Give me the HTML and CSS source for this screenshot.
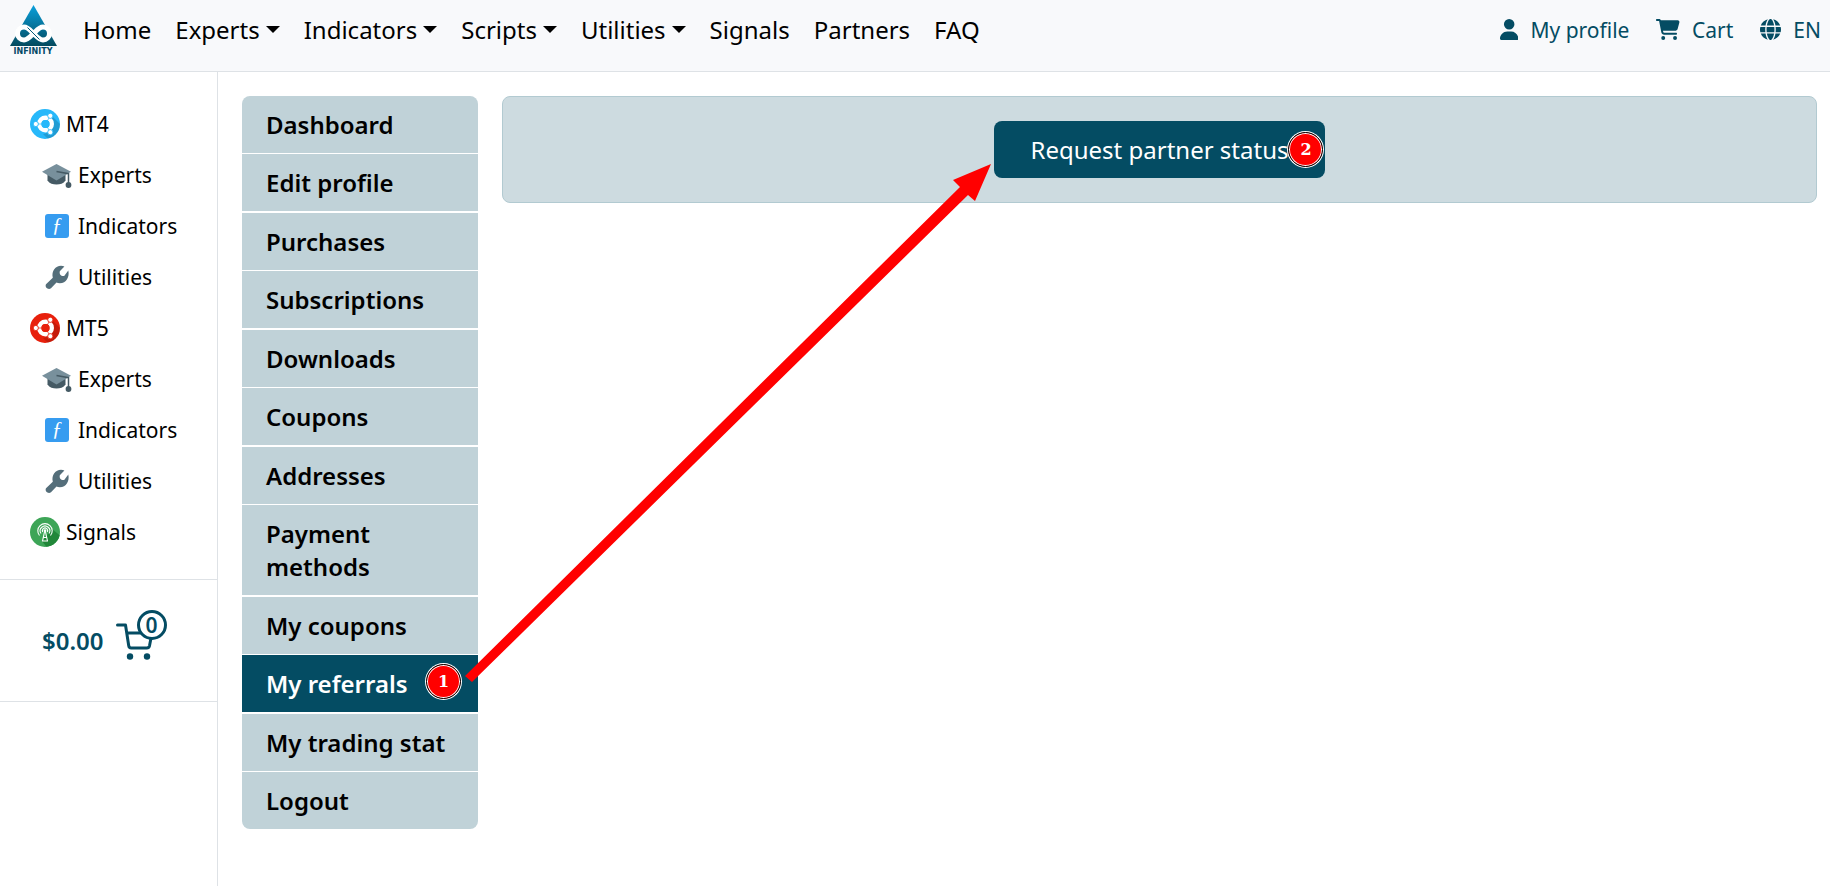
FILE: index.html
```html
<!DOCTYPE html>
<html lang="en">
<head>
    <meta charset="UTF-8">
    <meta name="viewport" content="width=device-width, initial-scale=1.0">
    <title>My referrals</title>
    <link rel="stylesheet" href="styles.css">
</head>
<body>
    <!-- Shared icons -->
    <svg class="sprite" aria-hidden="true">
        <defs>
            <linearGradient id="logoFill" x1="0" y1="0" x2="0" y2="1">
                <stop offset="0" stop-color="#0aa0dc"/>
                <stop offset="1" stop-color="#044a5e"/>
            </linearGradient>
            <clipPath id="disc"><circle cx="15" cy="15" r="15"/></clipPath>
        </defs>
        <symbol id="icon-platform" viewBox="0 0 30 30">
            <circle cx="15" cy="15" r="15" fill="currentColor"/>
            <path d="M21 6l12 12v16H22l-9-9 8-2 1-8z" fill="#000" opacity=".15" clip-path="url(#disc)"/>
            <circle cx="15.5" cy="15" r="6.3" fill="none" stroke="#fff" stroke-width="4.4"/>
            <path d="M15.5 15H4M15.500 15L21 5.500M15.500 15L21 24.500" stroke="currentColor" stroke-width=".7"/>
            <g fill="#fff" stroke="currentColor" stroke-width=".9">
                <circle cx="5.800" cy="15" r="2.600"/>
                <circle cx="20.300" cy="6.800" r="2.600"/>
                <circle cx="20.300" cy="23.200" r="2.600"/>
            </g>
            <circle cx="15.5" cy="15" r="4" fill="currentColor"/>
        </symbol>
        <symbol id="icon-experts" viewBox="0 0 30 30">
            <path d="M5.500 12v8.500c2 3 5.500 4 9 4s7-1 9-4V12z" fill="#455a64"/>
            <path d="M14.500 4L29 11.800 14.500 20.500 0 11.800z" fill="#78909c"/>
            <path d="M14.500 11.500l12 2.200v10" fill="none" stroke="#455a64" stroke-width="1.500"/>
            <circle cx="26.500" cy="25" r="2.900" fill="#455a64"/>
        </symbol>
        <symbol id="icon-utilities" viewBox="0 0 30 30">
            <path d="M4 22.200L10.800 15.800C9.300 9 13.500 3.800 19 3.800c1.300 0 2.400.2 3.400.6L17.800 9.300c-.7 3.200 1.300 5.200 4.400 4.700L26.300 8.500c1.500 6.500-2 12.700-8.500 12.700-1.400 0-2.400-.2-3.300-.6L9 26.300c-3 2-6.500-1.300-5-4.100z" fill="#546e7a"/>
        </symbol>
        <symbol id="icon-signals" viewBox="0 0 30 30">
            <circle cx="15" cy="15" r="15" fill="#3da557"/>
            <path d="M22 12l10 8v12H18l-6-8z" fill="#218739" clip-path="url(#disc)"/>
            <g fill="none" stroke="#fff" stroke-width="1.100">
                <path d="M9.500 18.500a7.200 7.200 0 1 1 11 0M11 16.500a4.800 4.800 0 1 1 8 0M12.800 15a2.600 2.600 0 1 1 4.400 0"/>
                <path d="M14.700 14L12.500 24M15.300 14L17.500 24M12 24h6M13 20.500h4"/>
            </g>
            <circle cx="15" cy="13.500" r="1.300" fill="#fff"/>
        </symbol>
    </svg>

    <header class="header">
        <a class="logo" href="#" aria-label="Infinity">
            <svg viewBox="0 0 50 50">
                <path d="M25.500 0L49 41H2z" fill="url(#logoFill)"/>
                <path d="M25.500 28.500C21.500 24.500 19.500 22 16 22a6.500 6.500 0 0 0 0 13c3.500 0 5.500-2.500 9.500-6.500S31.500 22 35 22a6.500 6.500 0 0 1 0 13c-3.500 0-5.500-2.500-9.500-6.500z" fill="none" stroke="#fff" stroke-width="5"/>
                <path d="M19.500 22.500L31.500 34.500" stroke="#075a78" stroke-width="1"/>
                <text x="25" y="49" class="logo-text">INFINITY</text>
            </svg>
        </a>
        <nav class="main-nav">
            <a href="#">Home</a>
            <button type="button" class="dropdown">Experts</button>
            <button type="button" class="dropdown">Indicators</button>
            <button type="button" class="dropdown">Scripts</button>
            <button type="button" class="dropdown">Utilities</button>
            <a href="#">Signals</a>
            <a href="#">Partners</a>
            <a href="#">FAQ</a>
        </nav>
        <nav class="user-nav">
            <a href="#">
                <svg viewBox="0 0 448 512"><path d="M224 256A128 128 0 1 0 224 0a128 128 0 1 0 0 256zm-45.700 48C79.800 304 0 383.800 0 482.300C0 498.700 13.300 512 29.700 512H418.300c16.400 0 29.700-13.300 29.700-29.700C448 383.800 368.200 304 269.700 304H178.300z"/></svg>
                My profile
            </a>
            <a href="#">
                <svg viewBox="0 0 576 512"><path d="M0 24C0 10.700 10.700 0 24 0H69.500c22 0 41.500 12.800 50.600 32h411c26.300 0 45.500 25 38.600 50.400l-41 152.300c-8.500 31.400-37 53.300-69.500 53.300H170.700l5.400 28.500c2.200 11.300 12.100 19.500 23.600 19.500H488c13.300 0 24 10.700 24 24s-10.700 24-24 24H199.700c-34.600 0-64.300-24.600-70.700-58.500L77.400 54.500c-.7-3.800-4-6.500-7.900-6.500H24C10.700 48 0 37.300 0 24zM128 464a48 48 0 1 1 96 0 48 48 0 1 1 -96 0zm336-48a48 48 0 1 1 0 96 48 48 0 1 1 0-96z"/></svg>
                Cart
            </a>
            <a href="#">
                <svg viewBox="0 0 512 512"><path d="M352 256c0 22.200-1.200 43.600-3.300 64H163.300c-2.200-20.400-3.300-41.800-3.300-64s1.200-43.600 3.300-64H348.700c2.200 20.400 3.300 41.800 3.300 64zm28.800-64H503.900c5.300 20.500 8.100 41.900 8.100 64s-2.800 43.500-8.100 64H380.800c2.100-20.600 3.200-42 3.200-64s-1.100-43.400-3.200-64zm112.600-32H376.700c-10-63.900-29.800-117.400-55.300-151.600c78.300 20.700 142 77.500 171.900 151.600zm-149.100 0H167.700c6.100-36.400 15.500-68.600 27-94.700c10.500-23.600 22.200-40.700 33.500-51.500C239.400 3.200 248.700 0 256 0s16.600 3.200 27.800 13.800c11.300 10.800 23 27.900 33.500 51.500c11.600 26 20.900 58.200 27 94.700zm-209 0H18.600C48.600 85.900 112.200 29.100 190.600 8.400C165.100 42.600 145.300 96.100 135.300 160zM8.100 192H131.200c-2.100 20.600-3.200 42-3.200 64s1.100 43.400 3.200 64H8.100C2.800 299.500 0 278.100 0 256s2.800-43.500 8.100-64zM194.700 446.600c-11.600-26-20.900-58.200-27-94.600H344.300c-6.100 36.400-15.500 68.600-27 94.600c-10.500 23.600-22.200 40.700-33.500 51.500C272.600 508.800 263.300 512 256 512s-16.600-3.200-27.800-13.800c-11.300-10.800-23-27.900-33.500-51.500zM135.300 352c10 63.900 29.800 117.400 55.300 151.600C112.200 482.900 48.600 426.100 18.600 352H135.300zm358.100 0c-30 74.100-93.600 130.900-171.900 151.600c25.500-34.200 45.200-87.700 55.300-151.600H493.400z"/></svg>
                EN
            </a>
        </nav>
    </header>

    <div class="page">
        <aside class="sidebar">
            <ul class="categories">
                <li><a href="#"><svg class="mt4"><use href="#icon-platform"/></svg>MT4</a></li>
                <li class="sub"><a href="#"><svg><use href="#icon-experts"/></svg>Experts</a></li>
                <li class="sub"><a href="#"><span class="icon-fn">ƒ</span>Indicators</a></li>
                <li class="sub"><a href="#"><svg><use href="#icon-utilities"/></svg>Utilities</a></li>
                <li><a href="#"><svg class="mt5"><use href="#icon-platform"/></svg>MT5</a></li>
                <li class="sub"><a href="#"><svg><use href="#icon-experts"/></svg>Experts</a></li>
                <li class="sub"><a href="#"><span class="icon-fn">ƒ</span>Indicators</a></li>
                <li class="sub"><a href="#"><svg><use href="#icon-utilities"/></svg>Utilities</a></li>
                <li><a href="#"><svg><use href="#icon-signals"/></svg>Signals</a></li>
            </ul>
            <a class="mini-cart" href="#">
                <span>$0.00</span>
                <span class="mini-cart-icon">
                    <svg viewBox="0 0 38 38">
                        <path d="M1.500 3h8l3.200 20.500c.2 1.500 1 2.500 2.500 2.500h15.600c1.500 0 2.300-.8 2.700-2.200L36 11H11" fill="none" stroke="currentColor" stroke-width="3" stroke-linecap="round" stroke-linejoin="round"/>
                        <circle cx="14" cy="34.500" r="3.200" fill="currentColor"/>
                        <circle cx="31" cy="34.500" r="3.200" fill="currentColor"/>
                    </svg>
                    <span class="mini-cart-count">0</span>
                </span>
            </a>
        </aside>

        <main class="content">
            <nav class="account-nav">
                <a href="#">Dashboard</a>
                <a href="#">Edit profile</a>
                <a href="#">Purchases</a>
                <a href="#">Subscriptions</a>
                <a href="#">Downloads</a>
                <a href="#">Coupons</a>
                <a href="#">Addresses</a>
                <a href="#">Payment methods</a>
                <a href="#">My coupons</a>
                <a href="#" class="active">My referrals<span class="step step-1">1</span></a>
                <a href="#">My trading stat</a>
                <a href="#">Logout</a>
            </nav>
            <section class="panel">
                <button type="button" class="request-btn">Request partner status<span class="step step-2">2</span></button>
            </section>
            <!-- Arrow from step 1 to step 2 -->
            <svg class="arrow" viewBox="0 0 530 522" aria-hidden="true">
                <path d="M3 512L498 23 491 16 529 0 513 37 506 31 10 518z" fill="#f00"/>
            </svg>
        </main>
    </div>
</body>
</html>
```
FILE: styles.css
```css
:root {
    --primary: #044c63;
    --border: #dee2e6;
    --menu: #c0d2d8;
    --panel: #cddbe0;
}

* {
    box-sizing: border-box;
    margin: 0;
    padding: 0;
}

body {
    font-family: "Noto Sans", sans-serif;
    font-size: 21px;
    min-height: 100vh;
    display: flex;
    flex-direction: column;
    background: #fff;
    color: #000;
}

a {
    color: inherit;
    text-decoration: none;
}

button {
    font: inherit;
    color: inherit;
    border: none;
    background: none;
    cursor: pointer;
}

.sprite {
    position: absolute;
    width: 0;
    height: 0;
}

/* Header */
.header {
    display: flex;
    align-items: center;
    height: 72px;
    padding: 0 9px 12px 8px;
    background: #f8f9fb;
    border-bottom: 1px solid var(--border);
}

.logo {
    margin-right: 13px;
}

.logo svg {
    display: block;
    width: 50px;
    height: 50px;
}

.logo-text {
    font: bold 8px "DejaVu Sans", sans-serif;
    text-anchor: middle;
    fill: #054a66;
}

.main-nav {
    display: flex;
    font-size: 24px;
    line-height: 36px;
}

.main-nav a,
.main-nav button {
    padding: 0 12px;
}

.dropdown::after {
    content: "";
    display: inline-block;
    margin-left: 6px;
    vertical-align: 6px;
    border-top: 7px solid;
    border-left: 7px solid transparent;
    border-right: 7px solid transparent;
}

.user-nav {
    display: flex;
    gap: 27px;
    margin-left: auto;
    line-height: 32px;
    color: var(--primary);
}

.user-nav a {
    display: flex;
    align-items: center;
    gap: 12px;
}

.user-nav svg {
    height: 21px;
    fill: currentColor;
}

/* Sidebar */
.page {
    flex: 1;
    display: flex;
}

.sidebar {
    flex: none;
    width: 218px;
    border-right: 1px solid var(--border);
}

.categories {
    list-style: none;
    padding: 26px 0 22px 30px;
}

.categories a {
    display: flex;
    align-items: center;
    gap: 6px;
    height: 51px;
}

.categories svg {
    width: 30px;
    height: 30px;
}

.sub {
    padding-left: 12px;
}

.mt4 {
    color: #27b8fa;
}

.mt5 {
    color: #e8200c;
}

.icon-fn {
    width: 24px;
    height: 24px;
    margin: 0 3px;
    border-radius: 3px;
    background: #369cf0;
    color: #fff;
    font: italic 21px/23px "Liberation Serif", serif;
    text-align: center;
}

.mini-cart {
    display: flex;
    align-items: center;
    gap: 12px;
    height: 123px;
    padding-left: 42px;
    border-top: 1px solid var(--border);
    border-bottom: 1px solid var(--border);
    font-size: 24px;
    font-weight: 600;
    color: var(--primary);
}

.mini-cart-icon {
    position: relative;
}

.mini-cart-icon svg {
    display: block;
    width: 38px;
    height: 38px;
}

.mini-cart-count {
    position: absolute;
    top: -12px;
    right: -13px;
    width: 30px;
    height: 30px;
    border: 3px solid;
    border-radius: 50%;
    background: #fff;
    font-size: 21px;
    line-height: 24px;
    text-align: center;
}

/* Account page */
.content {
    position: relative;
    flex: 1;
    display: flex;
    align-items: flex-start;
    gap: 24px;
    padding: 24px 13px 24px 24px;
}

.account-nav {
    flex: none;
    width: 236px;
    border-radius: 8px;
    overflow: hidden;
    font-size: 24px;
    font-weight: 600;
    line-height: 33px;
}

.account-nav a {
    display: block;
    position: relative;
    margin-bottom: 1px;
    padding: 12px 24px;
    background: var(--menu);
}

.account-nav a:nth-child(even) {
    margin-bottom: 2px;
}

.account-nav a:last-child {
    margin-bottom: 0;
}

.account-nav .active {
    background: var(--primary);
    color: #fff;
}

.panel {
    flex: 1;
    padding: 24px;
    border: 1px solid #b2cad1;
    border-radius: 8px;
    background: var(--panel);
    text-align: center;
}

.request-btn {
    position: relative;
    padding: 12px 37px;
    border-radius: 8px;
    background: var(--primary);
    color: #fff;
    font-size: 24px;
    line-height: 33px;
}

/* Numbered step markers */
.step {
    position: absolute;
    width: 35px;
    height: 35px;
    border: 1px solid #000;
    border-radius: 50%;
    background: #f00;
    box-shadow: 0 0 0 1px #fff, inset 0 0 0 1px #fff;
    color: #fff;
    font: bold 16px/33px "DejaVu Serif", serif;
    text-align: center;
}

.step-1 {
    top: 9px;
    right: 17px;
}

.step-2 {
    top: 11px;
    right: 2px;
}

.arrow {
    position: absolute;
    top: 92px;
    left: 244px;
    width: 530px;
    height: 522px;
    pointer-events: none;
}
```
